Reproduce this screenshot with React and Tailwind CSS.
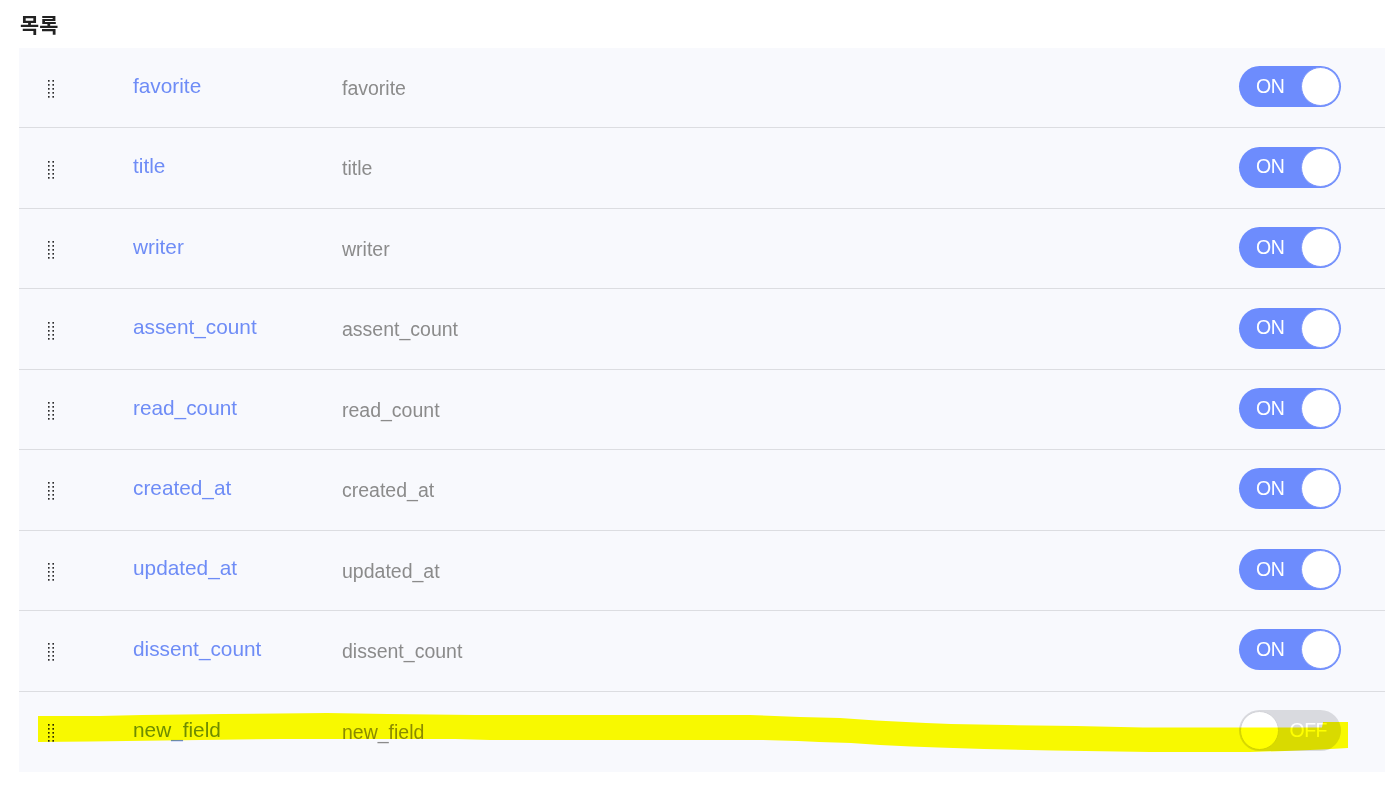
import React from 'react'

const FIELDS = [
  { name: 'favorite', label: 'favorite', on: true },
  { name: 'title', label: 'title', on: true },
  { name: 'writer', label: 'writer', on: true },
  { name: 'assent_count', label: 'assent_count', on: true },
  { name: 'read_count', label: 'read_count', on: true },
  { name: 'created_at', label: 'created_at', on: true },
  { name: 'updated_at', label: 'updated_at', on: true },
  { name: 'dissent_count', label: 'dissent_count', on: true },
  { name: 'new_field', label: 'new_field', on: false },
]

// hand-drawn marker stroke over the last row
const HIGHLIGHT = [
  [38, 716], [100, 716], [142, 715], [223, 714], [327, 713], [388, 714], [475, 715],
  [750, 715], [800, 717], [840, 718], [876, 720.5], [926, 723], [951, 724], [1007, 725],
  [1076, 726], [1143, 727.5], [1322, 727.5], [1323, 722], [1348, 722],
  [1348, 748], [1322, 749.5], [1285, 751], [1250, 752], [1150, 752], [1053, 750.5],
  [984, 749], [938, 747.5], [911, 746.5], [880, 745], [851, 743], [819, 742], [798, 741],
  [763, 740], [750, 740], [490, 740], [455, 739], [282, 739], [90, 741.5], [38, 742],
]

function Grip() {
  const rows = [0, 1, 2, 3, 4]
  return (
    <svg width="9" height="18" viewBox="0 0 9 18" className="block">
      {rows.map(r => (
        <g key={r} fill="#2b2b2b">
          <rect x="1" y={r * 4} width="1.6" height="1.7" />
          <rect x="5.4" y={r * 4} width="1.6" height="1.7" />
        </g>
      ))}
    </svg>
  )
}

function Toggle({ on }) {
  if (on) {
    return (
      <div className="flex items-center w-[102px] h-[41px] rounded-full bg-[#6d8cfd] pl-[17px] pr-[1px]">
        <span className="text-white text-[19.5px] leading-none flex-1 tracking-[-0.5px]">ON</span>
        <span className="w-[39px] h-[39px] rounded-full bg-white border border-[#7d97fb]" />
      </div>
    )
  }
  return (
    <div className="flex items-center w-[102px] h-[41px] rounded-full bg-[#d9dadf] pl-[1px] pr-[14px]">
      <span className="w-[39px] h-[39px] rounded-full bg-white border border-[#d2d3d8]" />
      <span className="text-white text-[19.5px] leading-none flex-1 text-right tracking-[-0.5px]">OFF</span>
    </div>
  )
}

export default function App() {
  return (
    <div className="relative w-[1390px] h-[785px] bg-white font-['Liberation_Sans','Noto_Sans_CJK_KR',sans-serif]">
      <div className="pl-[20px] pt-[14px] h-[48px]">
        <h2 className="text-[20.8px] font-bold leading-[24px] text-[#222]">목록</h2>
      </div>

      <div className="ml-[19px] w-[1366px] bg-[#f8f9fd]">
        {FIELDS.map((f, i) => (
          <div
            key={f.name}
            className={
              'flex items-center h-[80.44px] ' +
              (i < FIELDS.length - 1 ? 'border-b border-[#dcdde1]' : '')
            }
          >
            <div className="w-[114px] pl-[28px] mt-[3px]">
              <Grip />
            </div>
            <div className="w-[209px] text-[20.8px] leading-none text-[#6e8cf6] -mt-[3px]">{f.name}</div>
            <div className="flex-1 text-[19.5px] leading-none text-[#8b8b8b] mt-[2px]">{f.label}</div>
            <div className="pr-[44px] -mt-[2px]">
              <Toggle on={f.on} />
            </div>
          </div>
        ))}
      </div>

      <svg
        className="absolute left-0 top-0 pointer-events-none mix-blend-multiply"
        width="1390"
        height="785"
        viewBox="0 0 1390 785"
      >
        <polygon points={HIGHLIGHT.map(p => p.join(',')).join(' ')} fill="#ffff00" />
      </svg>
    </div>
  )
}
